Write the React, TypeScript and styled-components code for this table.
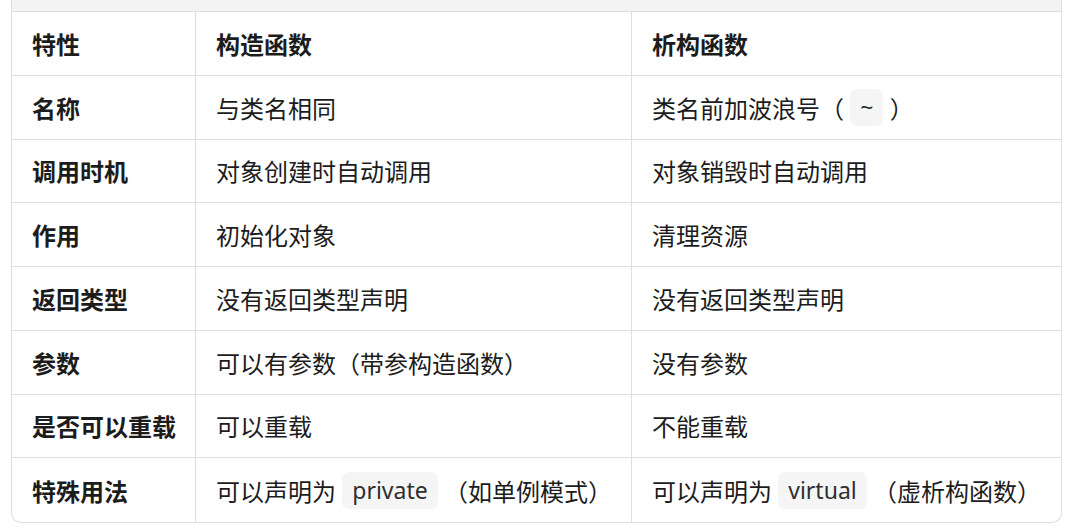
import React from "react";
import styled, { createGlobalStyle } from "styled-components";

const Global = createGlobalStyle`
  html, body { margin: 0; padding: 0; background: #ffffff; }
  body { font-family: "Noto Sans", "Noto Sans CJK SC", sans-serif; color: #1f1f1f; }
`;

const Page = styled.div`
  padding: 0 18px 0 11px;
  width: 1051px;
`;

const Wrapper = styled.div`
  border: 1px solid #dedede;
  border-top: none;
  border-radius: 0 0 10px 10px;
  overflow: hidden;
`;

const TopStrip = styled.div`
  height: 11px;
  background: #f3f3f3;
  border-bottom: 1px solid #dedede;
`;

const Row = styled.div<{ $last?: boolean }>`
  display: grid;
  grid-template-columns: 183px 436px 1fr;
  height: 63.75px;
  box-sizing: border-box;
  border-bottom: ${(p) => (p.$last ? "none" : "1px solid #dedede")};
`;

const Cell = styled.div<{ $head?: boolean; $first?: boolean }>`
  display: flex;
  align-items: center;
  padding: 0 20px;
  box-sizing: border-box;
  border-left: ${(p) => (p.$first ? "none" : "1px solid #dedede")};
  font-family: "Noto Sans", "Noto Sans CJK SC", sans-serif;
  font-size: 24px;
  font-weight: ${(p) => (p.$head ? 700 : 400)};
  white-space: pre;
  color: #1c1c1c;
`;

const Code = styled.span`
  display: inline-block;
  background: #f5f5f5;
  border-radius: 7px;
  padding: 5px 10px;
  font-family: "Noto Sans", sans-serif;
  font-size: 23px;
  line-height: 27px;
  color: #2f2f2f;
`;

type RowData = { key: string; a: React.ReactNode; b: React.ReactNode };

const rows: RowData[] = [
  { key: "名称", a: "与类名相同", b: <>类名前加波浪号（ <Code>~</Code> ）</> },
  { key: "调用时机", a: "对象创建时自动调用", b: "对象销毁时自动调用" },
  { key: "作用", a: "初始化对象", b: "清理资源" },
  { key: "返回类型", a: "没有返回类型声明", b: "没有返回类型声明" },
  { key: "参数", a: "可以有参数（带参构造函数）", b: "没有参数" },
  { key: "是否可以重载", a: "可以重载", b: "不能重载" },
  {
    key: "特殊用法",
    a: <>可以声明为 <Code>private</Code> （如单例模式）</>,
    b: <>可以声明为 <Code>virtual</Code> （虚析构函数）</>,
  },
];

export default function App() {
  return (
    <>
      <Global />
      <Page>
        <Wrapper>
          <TopStrip />
          <Row>
            <Cell $head $first>特性</Cell>
            <Cell $head>构造函数</Cell>
            <Cell $head>析构函数</Cell>
          </Row>
          {rows.map((r, i) => (
            <Row key={r.key} $last={i === rows.length - 1}>
              <Cell $head $first>{r.key}</Cell>
              <Cell>{r.a}</Cell>
              <Cell>{r.b}</Cell>
            </Row>
          ))}
        </Wrapper>
      </Page>
    </>
  );
}
